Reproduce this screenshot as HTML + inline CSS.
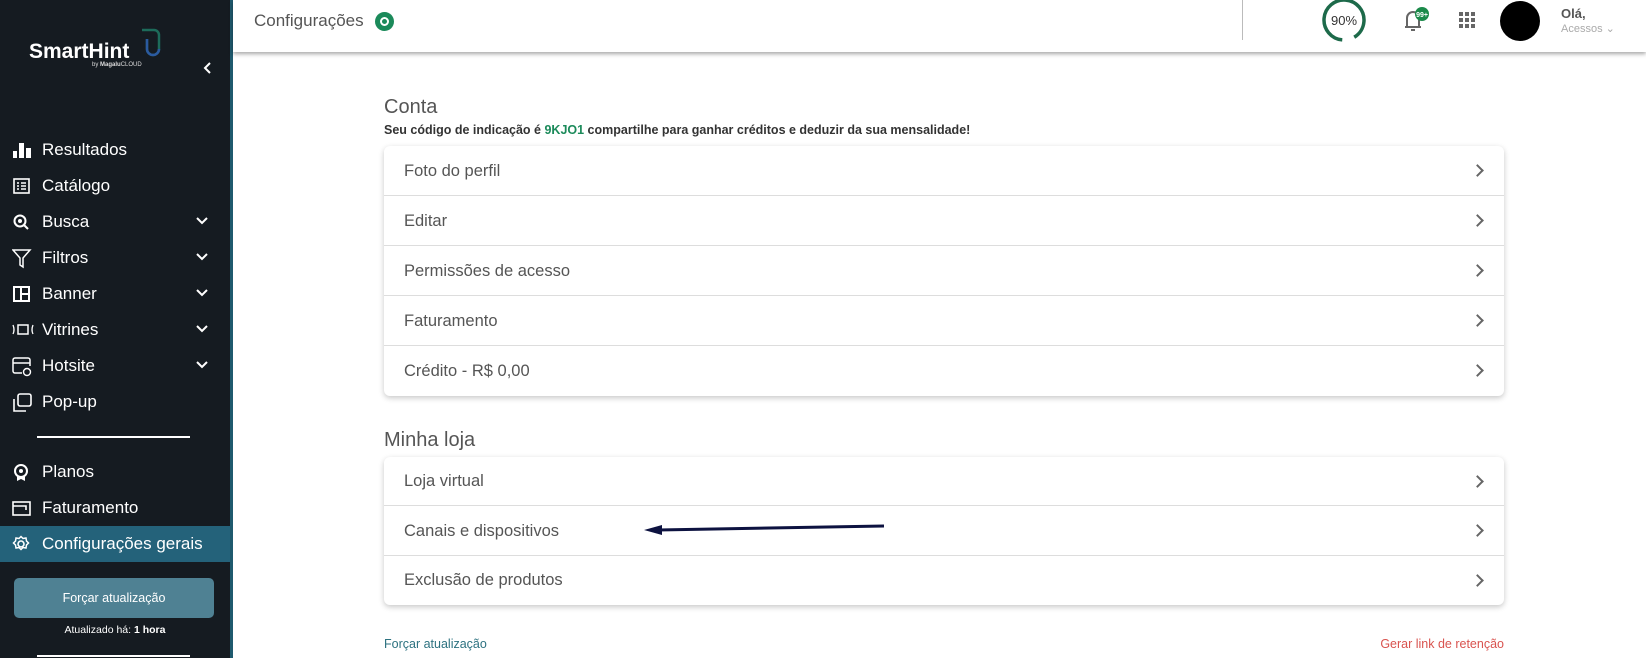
<!DOCTYPE html>
<html><head><meta charset="utf-8"><style>
*{margin:0;padding:0;box-sizing:border-box}
body{width:1646px;height:658px;overflow:hidden;background:#fff;font-family:"Liberation Sans",sans-serif;position:relative}
.sb{position:absolute;left:0;top:0;width:230px;height:658px;background:#151b21}
.stripe{position:absolute;left:230px;top:0;width:3px;height:658px;background:#1f5a6e}
.it{position:absolute;left:0;width:230px;height:36px;color:#fff;font-size:17px;line-height:36px;padding-left:42px}
.it svg.ic{position:absolute;left:12px;top:9px}
.it .ch{position:absolute;left:196px;top:13px}
.hdr{position:absolute;left:233px;top:0;width:1413px;height:52px;background:#fff;box-shadow:0 2px 4px rgba(0,0,0,.35)}
.card{position:absolute;left:384px;width:1120px;background:#fff;border-radius:6px;box-shadow:0 2px 6px rgba(0,0,0,.22)}
.row{height:50px;border-bottom:1px solid #ddd;font-size:16.5px;color:#555;line-height:50px;padding-left:20px;position:relative}
.row:last-child{border-bottom:none}
.row:after{content:"";position:absolute;right:22px;top:20px;width:7px;height:7px;border-right:2px solid #666;border-top:2px solid #666;transform:rotate(45deg)}
h2{position:absolute;left:384px;font-weight:normal;font-size:20px;color:#555}
</style></head><body>
<div class="sb">
 <div style="position:absolute;left:29px;top:40px;color:#fff;font-weight:bold;font-size:21px">SmartHint</div>
 <svg style="position:absolute;left:140px;top:26px" width="22" height="36"><path d="M2 4h12a5 5 0 0 1 5 5v14a6 6 0 0 1-12 0V13" fill="none" stroke="#1d6b5a" stroke-width="2.5"/><path d="M7 13v10a6 6 0 0 0 12 0" fill="none" stroke="#2b5aa0" stroke-width="2.5"/></svg>
 <div style="position:absolute;left:92px;top:62px;color:#ddd;font-size:6px">by <b>Magalu</b>CLOUD</div>
 <svg style="position:absolute;left:203px;top:62px" width="10" height="12"><path d="M7 1L2 6l5 5" fill="none" stroke="#fff" stroke-width="2"/></svg>
 <div class="it" style="top:132px"><svg class="ic" width="20" height="18"><rect x="1" y="10" width="4" height="7" fill="#fff"/><rect x="7" y="2" width="5" height="15" fill="#fff"/><rect x="14" y="7" width="5" height="10" fill="#fff"/></svg>Resultados</div>
 <div class="it" style="top:168px"><svg class="ic" width="20" height="18"><rect x="2" y="2" width="15" height="14" fill="none" stroke="#fff" stroke-width="1.6"/><path d="M5 6h2M9 6h5M5 9h2M9 9h5M5 12h2M9 12h5" stroke="#fff" stroke-width="1.4"/></svg>Catálogo</div>
 <div class="it" style="top:204px"><svg class="ic" width="20" height="18"><circle cx="8" cy="8" r="5.5" fill="none" stroke="#fff" stroke-width="2"/><circle cx="8" cy="8" r="2" fill="#fff"/><path d="M12 12l4 4" stroke="#fff" stroke-width="2"/></svg>Busca<svg class="ch" width="12" height="8"><path d="M1 1l5 5 5-5" fill="none" stroke="#fff" stroke-width="2"/></svg></div>
 <div class="it" style="top:240px"><svg class="ic" width="20" height="20"><path d="M1 1h17l-7 8v9l-3-2V9z" fill="none" stroke="#fff" stroke-width="1.5"/></svg>Filtros<svg class="ch" width="12" height="8"><path d="M1 1l5 5 5-5" fill="none" stroke="#fff" stroke-width="2"/></svg></div>
 <div class="it" style="top:276px"><svg class="ic" width="20" height="18"><rect x="2" y="2" width="15" height="14" fill="none" stroke="#fff" stroke-width="2"/><path d="M9 2v14M9 9h8" stroke="#fff" stroke-width="2"/></svg>Banner<svg class="ch" width="12" height="8"><path d="M1 1l5 5 5-5" fill="none" stroke="#fff" stroke-width="2"/></svg></div>
 <div class="it" style="top:312px"><svg class="ic" width="22" height="18"><rect x="6" y="4" width="10" height="9" fill="none" stroke="#fff" stroke-width="1.5"/><path d="M1 4q2 5 0 9M21 4q-2 5 0 9" fill="none" stroke="#fff" stroke-width="1.3"/></svg>Vitrines<svg class="ch" width="12" height="8"><path d="M1 1l5 5 5-5" fill="none" stroke="#fff" stroke-width="2"/></svg></div>
 <div class="it" style="top:348px"><svg class="ic" width="22" height="20"><path d="M10 16H3a2 2 0 0 1-2-2V3a2 2 0 0 1 2-2h13a2 2 0 0 1 2 2v6M1 6h17" fill="none" stroke="#fff" stroke-width="1.5"/><circle cx="15" cy="15" r="3.5" fill="none" stroke="#fff" stroke-width="1.4"/></svg>Hotsite<svg class="ch" width="12" height="8"><path d="M1 1l5 5 5-5" fill="none" stroke="#fff" stroke-width="2"/></svg></div>
 <div class="it" style="top:384px"><svg class="ic" width="20" height="20"><rect x="6" y="1" width="13" height="12" rx="2" fill="none" stroke="#fff" stroke-width="1.6"/><path d="M2 6v12h12" fill="none" stroke="#fff" stroke-width="1.6"/></svg>Pop-up</div>
 <div style="position:absolute;left:37px;top:436px;width:153px;height:2px;background:#fff"></div>
 <div class="it" style="top:454px"><svg class="ic" width="20" height="20"><circle cx="9" cy="8" r="6" fill="none" stroke="#fff" stroke-width="2"/><circle cx="9" cy="8" r="2" fill="#fff"/><path d="M5 13v5l4-2 4 2v-5" fill="#fff"/></svg>Planos</div>
 <div class="it" style="top:490px"><svg class="ic" width="20" height="18"><rect x="1" y="3" width="17" height="13" fill="none" stroke="#fff" stroke-width="1.6"/><path d="M1 7h13v4" fill="none" stroke="#fff" stroke-width="1.6"/></svg>Faturamento</div>
 <div class="it" style="top:526px;background:#24627a"><svg class="ic" width="20" height="20"><circle cx="9" cy="9" r="3" fill="none" stroke="#fff" stroke-width="1.6"/><path d="M9 1.5l2 2 3-.5 .5 3 2 2-2 2-.5 3-3-.5-2 2-2-2-3 .5-.5-3-2-2 2-2 .5-3 3 .5z" fill="none" stroke="#fff" stroke-width="1.5"/></svg>Configurações gerais</div>
 <div style="position:absolute;left:14px;top:578px;width:200px;height:40px;background:#4f8193;border-radius:5px;color:#fff;font-size:12.5px;text-align:center;line-height:40px">Forçar atualização</div>
 <div style="position:absolute;left:0;width:230px;top:624px;color:#fff;font-size:10.5px;text-align:center">Atualizado há: <b>1 hora</b></div>
 <div style="position:absolute;left:37px;top:655px;width:153px;height:2px;background:#fff"></div>
</div>
<div class="stripe"></div>
<div class="hdr">
 <div style="position:absolute;left:21px;top:11px;font-size:17px;color:#555">Configurações</div>
 <div style="position:absolute;left:142px;top:12px;width:19px;height:19px;border-radius:50%;background:#1b8a5a"><div style="position:absolute;left:5px;top:5px;width:9px;height:9px;border:2px solid #fff;border-radius:50%"></div></div>
 <div style="position:absolute;left:1009px;top:0;width:1px;height:40px;background:#bbb"></div>
 <svg style="position:absolute;left:1086px;top:-4px" width="50" height="48"><circle cx="25" cy="24" r="20" fill="none" stroke="#1d6a4a" stroke-width="3.5" stroke-dasharray="113 126" transform="rotate(95 25 24)"/><text x="25" y="29" font-size="13" text-anchor="middle" fill="#333" font-family="Liberation Sans">90%</text></svg>
 <svg style="position:absolute;left:1168px;top:6px" width="34" height="30"><path d="M4 21h16M6 21V12a6 6 0 0 1 12 0v9" fill="none" stroke="#666" stroke-width="2"/><path d="M10 24h4" stroke="#666" stroke-width="2"/><circle cx="21" cy="8" r="7" fill="#1b8a4a"/><text x="21" y="11" font-size="7" text-anchor="middle" fill="#fff" font-weight="bold">99+</text></svg>
 <svg style="position:absolute;left:1226px;top:12px" width="16" height="16"><g fill="#666"><rect x="0" y="0" width="4" height="4"/><rect x="6" y="0" width="4" height="4"/><rect x="12" y="0" width="4" height="4"/><rect x="0" y="6" width="4" height="4"/><rect x="6" y="6" width="4" height="4"/><rect x="12" y="6" width="4" height="4"/><rect x="0" y="12" width="4" height="4"/><rect x="6" y="12" width="4" height="4"/><rect x="12" y="12" width="4" height="4"/></g></svg>
 <div style="position:absolute;left:1267px;top:1px;width:40px;height:40px;border-radius:50%;background:#000"></div>
 <div style="position:absolute;left:1328px;top:6px;font-size:13px;color:#555;font-weight:bold">Olá, </div>
 <div style="position:absolute;left:1328px;top:22px;font-size:11px;color:#aaa">Acessos ⌄</div>
</div>
<h2 style="top:96px">Conta</h2>
<div style="position:absolute;left:384px;top:123px;font-size:12.5px;color:#333;font-weight:600">Seu código de indicação é <span style="color:#1b8a5a">9KJO1</span> compartilhe para ganhar créditos e deduzir da sua mensalidade!</div>
<div class="card" style="top:146px">
 <div class="row">Foto do perfil</div><div class="row">Editar</div><div class="row">Permissões de acesso</div><div class="row">Faturamento</div><div class="row">Crédito - R$ 0,00</div>
</div>
<h2 style="top:429px">Minha loja</h2>
<div class="card" style="top:457px">
 <div class="row" style="height:49px;line-height:49px">Loja virtual</div><div class="row" style="height:50px">Canais e dispositivos</div><div class="row" style="height:49px;line-height:49px">Exclusão de produtos</div>
</div>
<svg style="position:absolute;left:640px;top:520px" width="250" height="16"><path d="M18 10L244 6" stroke="#0d1240" stroke-width="3"/><path d="M4 10l18-5v10z" fill="#0d1240"/></svg>
<div style="position:absolute;left:384px;top:637px;font-size:12.5px;color:#2d7280">Forçar atualização</div>
<div style="position:absolute;right:142px;top:637px;font-size:12.5px;color:#d9534f">Gerar link de retenção</div>
</body></html>
